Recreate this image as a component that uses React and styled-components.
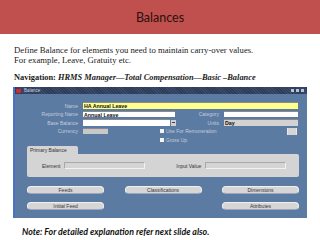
import React from 'react'
import styled, { createGlobalStyle } from 'styled-components'

const Global = createGlobalStyle`
  html, body { margin: 0; padding: 0; background: #ffffff; }
  body { width: 320px; height: 240px; overflow: hidden; }
`

const Slide = styled.div`
  width: 320px;
  height: 240px;
  display: flex;
  flex-direction: column;
  background: #fff;
`

const Header = styled.div`
  height: 34px;
  background: #c0504d;
  display: flex;
  align-items: center;
  justify-content: center;
  font-family: Lato, "Liberation Sans", sans-serif;
  font-size: 12.5px;
  color: #2a1010;
`

const Intro = styled.div`
  padding: 11px 0 0 14px;
  font-family: "Liberation Serif", serif;
  font-size: 8.7px;
  line-height: 10px;
  color: #1a1a1a;
`

const Nav = styled.div`
  margin-top: 8px;
  font-weight: bold;
  font-size: 8.4px;
  i { font-style: italic; }
`

const Window = styled.div`
  margin: 4px 0 0 13px;
  width: 294px;
  height: 131px;
  background: #5b7ba3;
  border-left: 2px solid #4c72c8;
  box-sizing: border-box;
  display: flex;
  flex-direction: column;
  font-family: "Liberation Sans", Arial, sans-serif;
  font-size: 5px;
`

const TitleBar = styled.div`
  height: 7px;
  background: repeating-linear-gradient(45deg, #2c3b58 0 1px, #3a4a68 1px 2px);
  display: flex;
  align-items: center;
  padding: 0 3px 0 1px;
  color: #c8d0e0;
  font-size: 4.5px;
  gap: 3px;
`

const AppIcon = styled.span`
  width: 5px;
  height: 4px;
  background: #d42a2a;
  border-radius: 1px;
  display: inline-block;
`

const TitleCtl = styled.span`
  margin-left: auto;
  display: flex;
  gap: 2px;
  span { width: 3px; height: 3px; background: #b8c2d6; display: inline-block; }
`

const Form = styled.div`
  padding: 8px 0 0 0;
  display: flex;
  flex-direction: column;
  gap: 1.5px;
`

const Row = styled.div`
  display: flex;
  align-items: center;
  height: 7px;
`

const Label = styled.span`
  width: ${p => p.$w}px;
  padding-right: 5px;
  box-sizing: border-box;
  text-align: right;
  color: #c3cbdc;
  white-space: nowrap;
`

const Field = styled.span`
  width: ${p => p.$w}px;
  height: 6.5px;
  background: ${p => p.$bg || '#ffffff'};
  box-sizing: border-box;
  border-top: 1px solid #8a8a8a;
  font-weight: bold;
  font-size: 5.3px;
  line-height: 6px;
  padding-left: 1px;
  color: #111;
  white-space: nowrap;
  overflow: hidden;
`

const MiniBtn = styled.span`
  width: 5px;
  height: 6px;
  margin-left: 1px;
  background: #d0d0d0;
  display: flex;
  align-items: center;
  justify-content: center;
  &::after { content: ''; width: 3px; height: 1px; background: #444; }
`

const Check = styled.span`
  display: flex;
  align-items: center;
  gap: 2px;
  color: #c3cbdc;
  white-space: nowrap;
  margin-left: ${p => p.$ml || 0}px;
  &::before { content: ''; width: 4px; height: 4px; background: #f4f4f4; }
`

const Widget = styled.span`
  margin-left: auto;
  margin-right: 10px;
  width: 8px;
  height: 7px;
  background: #d4d4d4;
  border-left: 1px solid #e8e8e8;
  border-right: 1px solid #e8e8e8;
`

const Tabs = styled.div`
  margin: 3px 0 0 12px;
  width: 272px;
  display: flex;
  flex-direction: column;
`

const Tab = styled.div`
  width: 51px;
  height: 8px;
  background: #d4d4d4;
  border-radius: 2px 2px 0 0;
  color: #333;
  padding-left: 3px;
  line-height: 8px;
  box-sizing: border-box;
  white-space: nowrap;
`

const Panel = styled.div`
  height: 23px;
  background: #d4d4d4;
  border-radius: 0 2px 2px 2px;
  display: flex;
  align-items: center;
  color: #333;
`

const PanelField = styled.span`
  width: ${p => p.$w}px;
  height: 6.5px;
  border: 1px solid #a8a8a8;
  border-right-color: #f2f2f2;
  border-bottom-color: #f2f2f2;
  box-sizing: border-box;
  margin-left: 4px;
`

const PanelLabel = styled.span`
  margin-left: ${p => p.$ml}px;
  white-space: nowrap;
`

const Buttons = styled.div`
  margin: 9px 0 0 12px;
  width: 272px;
  display: grid;
  grid-template-columns: repeat(3, 77px);
  justify-content: space-between;
  row-gap: 8px;
`

const Btn = styled.div`
  grid-column: ${p => p.$col};
  height: 8px;
  border-radius: 4px;
  background: #d6d6d6;
  border: 1px solid #f0f0f0;
  border-bottom-color: #9aa6ba;
  box-sizing: border-box;
  display: flex;
  align-items: center;
  justify-content: center;
  color: #333;
`

const Note = styled.div`
  margin: 8px 0 0 22px;
  font-family: Lato, "Liberation Sans", sans-serif;
  font-size: 8.8px;
  font-weight: bold;
  font-style: italic;
  color: #111;
`

export default function App() {
  return (
    <Slide>
      <Global />
      <Header>Balances</Header>
      <Intro>
        Define Balance for elements you need to maintain carry-over values.<br />
        For example, Leave, Gratuity etc.
        <Nav>Navigation: <i>HRMS Manager—Total Compensation—Basic –Balance</i></Nav>
      </Intro>
      <Window>
        <TitleBar>
          <AppIcon />Balance
          <TitleCtl><span /><span /><span /></TitleCtl>
        </TitleBar>
        <Form>
          <Row>
            <Label $w={68}>Name</Label>
            <Field $w={215} $bg="#ffff8c">HA Annual Leave</Field>
          </Row>
          <Row>
            <Label $w={68}>Reporting Name</Label>
            <Field $w={92}>Annual Leave</Field>
            <Label $w={49}>Category</Label>
            <Field $w={74} />
          </Row>
          <Row>
            <Label $w={68}>Base Balance</Label>
            <Field $w={87} />
            <MiniBtn />
            <Label $w={48}>Units</Label>
            <Field $w={74} $bg="#d2d2d2">Day</Field>
          </Row>
          <Row>
            <Label $w={68}>Currency</Label>
            <Field $w={25} $bg="#c8c8c8" />
            <Check $ml={52}>Use For Remuneration</Check>
            <Widget />
          </Row>
          <Row>
            <Check $ml={145}>Gross Up</Check>
          </Row>
        </Form>
        <Tabs>
          <Tab>Primary Balance</Tab>
          <Panel>
            <PanelLabel $ml={15}>Element</PanelLabel>
            <PanelField $w={81} />
            <PanelLabel $ml={31}>Input Value</PanelLabel>
            <PanelField $w={81} />
          </Panel>
        </Tabs>
        <Buttons>
          <Btn $col={1}>Feeds</Btn>
          <Btn $col={2}>Classifications</Btn>
          <Btn $col={3}>Dimensions</Btn>
          <Btn $col={1}>Initial Feed</Btn>
          <Btn $col={3}>Attributes</Btn>
        </Buttons>
      </Window>
      <Note>Note: For detailed explanation refer next slide also.</Note>
    </Slide>
  )
}
